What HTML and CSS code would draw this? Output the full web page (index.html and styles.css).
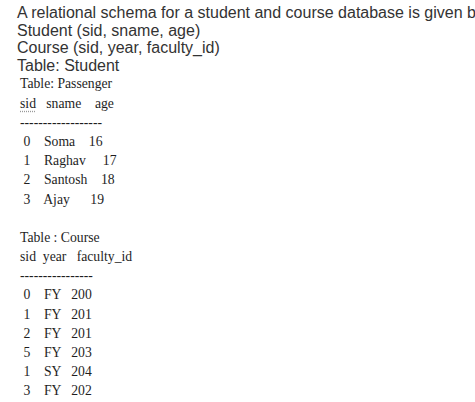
FILE: index.html
```html
<!DOCTYPE html>
<html>
<head>
<meta charset="utf-8">
<link rel="stylesheet" href="styles.css">
</head>
<body>
<div class="page">
  <div class="intro">
    <p class="line">A relational schema for a student and course database is given below.</p>
    <p class="line">Student (sid, sname, age)</p>
    <p class="line">Course (sid, year, faculty_id)</p>
    <p class="line">Table: Student</p>
  </div>
  <div class="tables">
    <div class="row">Table: Passenger</div>
    <div class="row"><span class="squiggle">sid</span>   sname    age</div>
    <div class="row dashes">------------------</div>
    <div class="row"> 0    Soma    16</div>
    <div class="row"> 1    Raghav     17</div>
    <div class="row"> 2    Santosh    18</div>
    <div class="row"> 3    Ajay      19</div>
    <div class="row"> </div>
    <div class="row">Table : Course</div>
    <div class="row">sid  year   faculty_id</div>
    <div class="row dashes">----------------</div>
    <div class="row"> 0    FY   200</div>
    <div class="row"> 1    FY   201</div>
    <div class="row"> 2    FY   201</div>
    <div class="row"> 5    FY   203</div>
    <div class="row"> 1    SY   204</div>
    <div class="row"> 3    FY   202</div>
  </div>
</div>
</body>
</html>
```
FILE: styles.css
```css
html, body {
  margin: 0;
  padding: 0;
  background: #ffffff;
  overflow: hidden;
}

.page {
  width: 475px;
  height: 402px;
  overflow: hidden;
  padding-top: 4px;
  box-sizing: border-box;
}

.intro {
  padding-left: 17px;
  font-family: "Liberation Sans", Arial, sans-serif;
  font-size: 16px;
  line-height: 17.6px;
  color: #333333;
  white-space: nowrap;
}

.line {
  margin: 0;
}

.tables {
  padding-left: 20px;
  font-family: "Liberation Serif", "Times New Roman", serif;
  font-size: 13.7px;
  line-height: 19.2px;
  color: #1e1e1e;
}

.row {
  white-space: pre;
  height: 19.2px;
}

.dashes {
  letter-spacing: 0;
}

.squiggle {
  text-decoration: underline dotted #9a9a9a;
  text-underline-offset: 3px;
}
```
